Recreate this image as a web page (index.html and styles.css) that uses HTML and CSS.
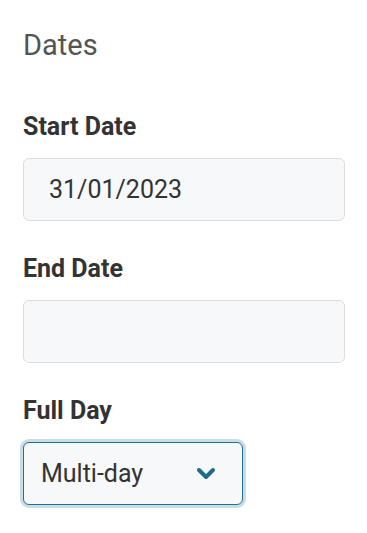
FILE: index.html
```html
<!DOCTYPE html>
<html>
<head>
<meta charset="utf-8">
<link rel="stylesheet" href="styles.css">
</head>
<body>
<div class="panel">
  <h2 class="title">Dates</h2>
  <div class="field">
    <label class="label">Start Date</label>
    <div class="input">31/01/2023</div>
  </div>
  <div class="field">
    <label class="label">End Date</label>
    <div class="input"></div>
  </div>
  <div class="field">
    <label class="label">Full Day</label>
    <div class="select">
      <span class="select-text">Multi-day</span>
      <svg class="chevron" width="20" height="14" viewBox="0 0 20 14"><polyline points="3,3 10,10 17,3" fill="none" stroke="#1f6a88" stroke-width="4" stroke-linecap="round" stroke-linejoin="round"/></svg>
    </div>
  </div>
</div>
</body>
</html>
```
FILE: styles.css
```css
html, body {
  margin: 0;
  padding: 0;
  background: #ffffff;
}
body {
  font-family: Roboto, "Liberation Sans", sans-serif;
}
.panel {
  padding: 29px 22px 0 23px;
  display: flex;
  flex-direction: column;
}
.title {
  margin: 0 0 52px 0;
  font-size: 29px;
  line-height: 32px;
  font-weight: 400;
  color: #545454;
}
.field {
  display: flex;
  flex-direction: column;
  margin-bottom: 34px;
}
.label {
  font-size: 25px;
  line-height: 28px;
  font-weight: 700;
  color: #333333;
  margin-bottom: 17px;
}
.input {
  box-sizing: border-box;
  height: 63px;
  width: 322px;
  border: 1px solid #dddddd;
  border-radius: 6px;
  background: #f7f8fa;
  padding: 0 25px;
  display: flex;
  align-items: center;
  font-size: 25px;
  color: #333333;
}
.select {
  box-sizing: border-box;
  height: 63px;
  width: 220px;
  border: 1px solid #236f8f;
  border-radius: 6px;
  background: #f7f8fa;
  box-shadow: 0 0 0 3px #c9dde6;
  padding: 0 26px 0 17px;
  display: flex;
  align-items: center;
  justify-content: space-between;
  font-size: 25px;
  color: #333333;
}
.chevron {
  display: block;
}
```
